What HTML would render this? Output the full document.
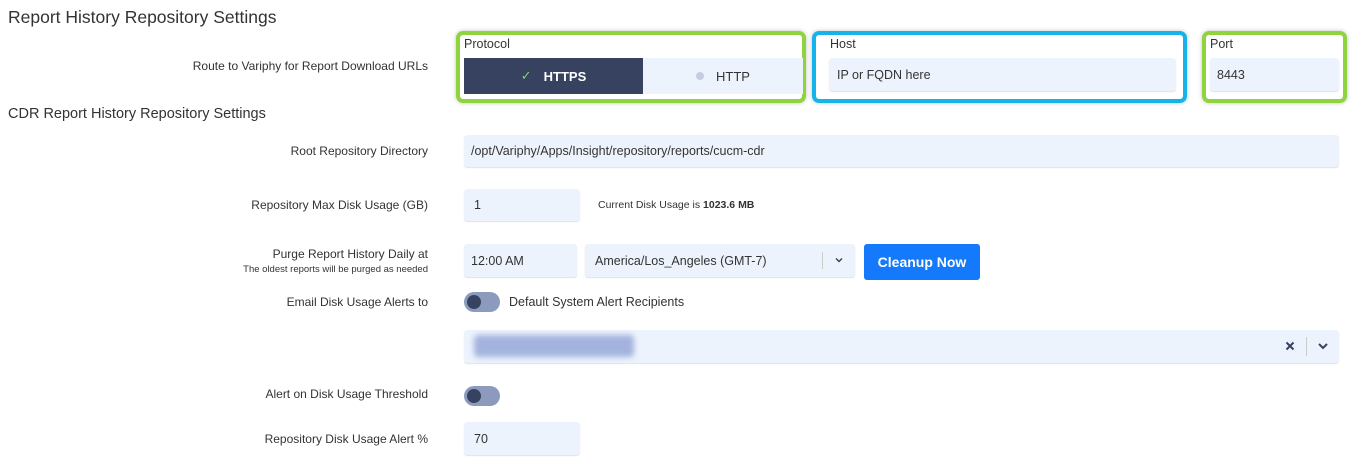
<!DOCTYPE html>
<html><head><style>
*{box-sizing:border-box;margin:0;padding:0}
body{width:1370px;height:464px;background:#fff;font-family:"Liberation Sans",sans-serif;color:#333;position:relative;overflow:hidden;font-size:13px}
.a{position:absolute}
.lbl{position:absolute;right:942px;text-align:right;font-size:12px;color:#333;white-space:nowrap}
.inp{position:absolute;background:#edf3fd;border-radius:3px;box-shadow:0 1px 1px rgba(0,0,0,.12);font-size:12.5px;color:#333;padding-left:10px;display:flex;align-items:center}
.box{position:absolute;border:4px solid #8fd43f;border-radius:7px;box-shadow:0 0 4px rgba(0,0,0,.25)}
.tog{position:absolute;width:36px;height:20px;border-radius:10px;background:#8c9bbd}
.tog::after{content:"";position:absolute;left:3px;top:3px;width:14px;height:14px;border-radius:50%;background:#36425f}
</style></head><body>
<div class="a" style="left:8px;top:7px;font-size:17.5px;color:#333">Report History Repository Settings</div>

<div class="box" style="left:456px;top:31px;width:350px;height:72px"></div>
<div class="box" style="left:812px;top:31px;width:375px;height:72px;border-color:#15b3ea"></div>
<div class="box" style="left:1202px;top:31px;width:145px;height:72px"></div>

<div class="a" style="left:464px;top:37px;font-size:12.5px">Protocol</div>
<div class="a" style="left:464px;top:58px;width:179px;height:36px;background:#36425f;color:#fff;font-weight:bold;display:flex;align-items:center;justify-content:center;font-size:13px"><span style="color:#7ed27a;margin-right:12px;font-weight:normal">✓</span>HTTPS</div>
<div class="a" style="left:643px;top:58px;width:160px;height:36px;background:#edf3fd;display:flex;align-items:center;justify-content:center;font-size:13px"><span style="width:8px;height:8px;border-radius:50%;background:#c5cde0;margin-right:12px;display:inline-block"></span>HTTP</div>
<div class="a" style="left:830px;top:37px;font-size:12.5px">Host</div>
<div class="inp" style="left:829px;top:58px;width:347px;height:33px;padding-left:8px">IP or FQDN here</div>
<div class="a" style="left:1210px;top:37px;font-size:12.5px">Port</div>
<div class="inp" style="left:1210px;top:58px;width:129px;height:33px;padding-left:7px">8443</div>
<div class="lbl" style="top:59px">Route to Variphy for Report Download URLs</div>

<div class="a" style="left:8px;top:106px;font-size:14.5px">CDR Report History Repository Settings</div>

<div class="lbl" style="top:144px">Root Repository Directory</div>
<div class="inp" style="left:464px;top:135px;width:875px;height:32px;padding-left:7px">/opt/Variphy/Apps/Insight/repository/reports/cucm-cdr</div>

<div class="lbl" style="top:198px">Repository Max Disk Usage (GB)</div>
<div class="inp" style="left:464px;top:189px;width:116px;height:32px">1</div>
<div class="a" style="left:598px;top:199px;font-size:10.5px">Current Disk Usage is <b>1023.6 MB</b></div>

<div class="lbl" style="top:247px">Purge Report History Daily at</div>
<div class="lbl" style="top:264px;font-size:9.5px">The oldest reports will be purged as needed</div>
<div class="inp" style="left:464px;top:244px;width:113px;height:33px;padding-left:7px">12:00 AM</div>
<div class="inp" style="left:585px;top:244px;width:270px;height:33px">America/Los_Angeles (GMT-7)
<span style="position:absolute;left:237px;top:8px;width:1px;height:17px;background:#ccc"></span>
<svg class="a" style="left:249px;top:12px" width="10" height="8" viewBox="0 0 10 8"><path d="M2 2.5l3 3 3-3" stroke="#444" stroke-width="1.5" fill="none"/></svg></div>
<div class="a" style="left:864px;top:244px;width:116px;height:36px;background:#1479fb;border-radius:3px;color:#fff;font-weight:bold;font-size:14px;display:flex;align-items:center;justify-content:center">Cleanup Now</div>

<div class="lbl" style="top:295px">Email Disk Usage Alerts to</div>
<div class="tog" style="left:464px;top:292px"></div>
<div class="a" style="left:509px;top:295px;font-size:12.5px">Default System Alert Recipients</div>

<div class="inp" style="left:464px;top:330px;width:875px;height:33px">
<div class="a" style="left:10px;top:5px;width:160px;height:22px;background:#a3b3dd;filter:blur(3px);border-radius:4px"></div>
<svg class="a" style="left:821px;top:11px" width="10" height="10" viewBox="0 0 10 10"><path d="M1.5 1.5l7 7M8.5 1.5l-7 7" stroke="#36425f" stroke-width="2"/></svg>
<span style="position:absolute;left:842px;top:7px;width:1px;height:19px;background:#ccc"></span>
<svg class="a" style="left:853px;top:12px" width="12" height="9" viewBox="0 0 12 9"><path d="M2 2l4 4 4-4" stroke="#36425f" stroke-width="2" fill="none"/></svg>
</div>

<div class="lbl" style="top:387px">Alert on Disk Usage Threshold</div>
<div class="tog" style="left:464px;top:386px"></div>

<div class="lbl" style="top:432px">Repository Disk Usage Alert %</div>
<div class="inp" style="left:464px;top:422px;width:116px;height:33px">70</div>
</body></html>
